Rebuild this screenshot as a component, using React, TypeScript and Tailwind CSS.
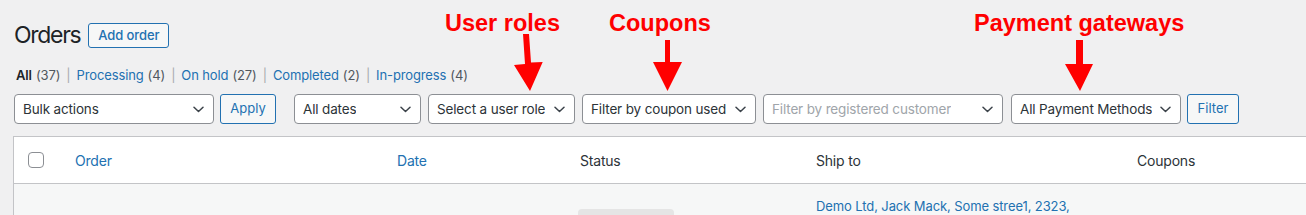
import React from "react";

const Chevron = () => (
  <svg width="11" height="7" viewBox="0 0 11 7" fill="none" className="shrink-0">
    <path d="M1 1.2 L5.5 5.5 L10 1.2" stroke="#3c434a" strokeWidth="1.5" strokeLinecap="round" strokeLinejoin="round" />
  </svg>
);

function Select({ label, w, ml, placeholder }: { label: string; w: string; ml: string; placeholder?: boolean }) {
  return (
    <div
      className={`${w} ${ml} h-[30px] flex items-center justify-between bg-white border border-[#8c8f94] rounded-[4px] pl-[8px] pr-[9px] text-[13.5px] tracking-[-0.15px] ${
        placeholder ? "text-[#a0a5aa]" : "text-[#2c3338]"
      }`}
    >
      <span className="whitespace-nowrap overflow-hidden">{label}</span>
      <Chevron />
    </div>
  );
}

const Sep = () => <span className="mx-[6px] text-[#a7aaad]">|</span>;

export default function App() {
  return (
    <div
      className="relative h-[215px] overflow-hidden bg-[#f0f0f1]"
      style={{ fontFamily: "Inter, 'Noto Sans', sans-serif" }}
    >
      <div className="pl-[14px] pt-[20px]">
        <div className="flex items-center h-[30px]">
          <h1 className="text-[23px] leading-[30px] font-normal text-[#1d2327] tracking-[-1.3px]">Orders</h1>
          <button className="ml-[8px] h-[25px] px-[9px] border border-[#2271b1] rounded-[3px] bg-[#f6f7f7] text-[#2271b1] text-[13px] font-medium leading-none tracking-[-0.1px]">
            Add order
          </button>
        </div>

        <div className="mt-[16px] h-[20px] pl-[2px] flex items-center text-[13px] whitespace-nowrap text-[#50575e] tracking-[-0.12px]">
          <span className="font-semibold text-[#1d2327]">All</span>
          <span className="ml-[4px]">(37)</span>
          <Sep />
          <span className="text-[#2271b1]">Processing</span>
          <span className="ml-[4px]">(4)</span>
          <Sep />
          <span className="text-[#2271b1]">On hold</span>
          <span className="ml-[4px]">(27)</span>
          <Sep />
          <span className="text-[#2271b1]">Completed</span>
          <span className="ml-[4px]">(2)</span>
          <Sep />
          <span className="text-[#2271b1]">In-progress</span>
          <span className="ml-[4px]">(4)</span>
        </div>

        <div className="mt-[8px] flex items-center h-[30px]">
          <Select label="Bulk actions" w="w-[200px]" ml="ml-0" />
          <button className="ml-[6px] w-[56px] h-[30px] border border-[#2271b1] rounded-[3px] bg-[#f6f7f7] text-[#2271b1] text-[13px]">
            Apply
          </button>
          <Select label="All dates" w="w-[127px]" ml="ml-[18px]" />
          <Select label="Select a user role" w="w-[147px]" ml="ml-[7px]" />
          <Select label="Filter by coupon used" w="w-[174px]" ml="ml-[7px]" />
          <Select label="Filter by registered customer" w="w-[240px]" ml="ml-[7px]" placeholder />
          <Select label="All Payment Methods" w="w-[170px]" ml="ml-[8px]" />
          <button className="ml-[6px] w-[52px] h-[30px] border border-[#2271b1] rounded-[3px] bg-[#f6f7f7] text-[#2271b1] text-[13px]">
            Filter
          </button>
        </div>

        <div className="mt-[12px] -ml-px -mr-[20px] border border-[#c3c4c7] bg-white">
          <div className="flex items-center h-[47px] border-b border-[#c3c4c7] text-[14px] tracking-[-0.2px]">
            <div className="w-[51px] pl-[14px] flex items-center">
              <div className="w-[16px] h-[16px] rounded-[4px] border border-[#8c8f94] bg-white" />
            </div>
            <div className="w-[322px] pl-[10px] text-[#2271b1]">Order</div>
            <div className="w-[183px] pl-[10px] text-[#2271b1]">Date</div>
            <div className="w-[236px] pl-[10px] text-[#2c3338]">Status</div>
            <div className="w-[321px] pl-[10px] text-[#2c3338]">Ship to</div>
            <div className="flex-1 pl-[10px] text-[#2c3338]">Coupons</div>
          </div>
          <div className="flex h-[60px] bg-[#f6f7f7]">
            <div className="w-[51px]" />
            <div className="w-[322px]" />
            <div className="w-[183px]" />
            <div className="w-[236px] pl-[8px] pt-[25px]">
              <div className="w-[96px] h-[26px] rounded-[4px] bg-[#e5e5e5]" />
            </div>
            <div className="w-[321px] pl-[10px] pt-[12px] text-[13px] leading-[20px] text-[#2271b1] whitespace-nowrap tracking-[-0.1px]">
              Demo Ltd, Jack Mack, Some stree1, 2323,
            </div>
            <div className="flex-1" />
          </div>
        </div>
      </div>

      {/* Annotations */}
      <div
        className="absolute left-[445px] top-[12px] text-[23.5px] leading-none font-bold text-[#ff0000] whitespace-nowrap"
        style={{ fontFamily: "'Liberation Sans', Arial, sans-serif" }}
      >
        User roles
      </div>
      <div
        className="absolute left-[609px] top-[12px] text-[23.5px] leading-none font-bold text-[#ff0000] whitespace-nowrap"
        style={{ fontFamily: "'Liberation Sans', Arial, sans-serif" }}
      >
        Coupons
      </div>
      <div
        className="absolute left-[974px] top-[12px] text-[23.5px] leading-none font-bold text-[#ff0000] whitespace-nowrap"
        style={{ fontFamily: "'Liberation Sans', Arial, sans-serif" }}
      >
        Payment gateways
      </div>
      <svg className="absolute left-0 top-0 pointer-events-none" width="1306" height="215" viewBox="0 0 1306 215">
        <polygon points="523,34 529,34 531,62.5 542.7,62 530,91 514,65 525,64" fill="#ff0000" />
        <polygon points="665,40 670,40 670,62 682,62 667.5,91 653,62 665,62" fill="#ff0000" />
        <polygon points="1076,40 1083,40 1083,64 1093,64 1080,91 1065,64 1076,64" fill="#ff0000" />
      </svg>
    </div>
  );
}
